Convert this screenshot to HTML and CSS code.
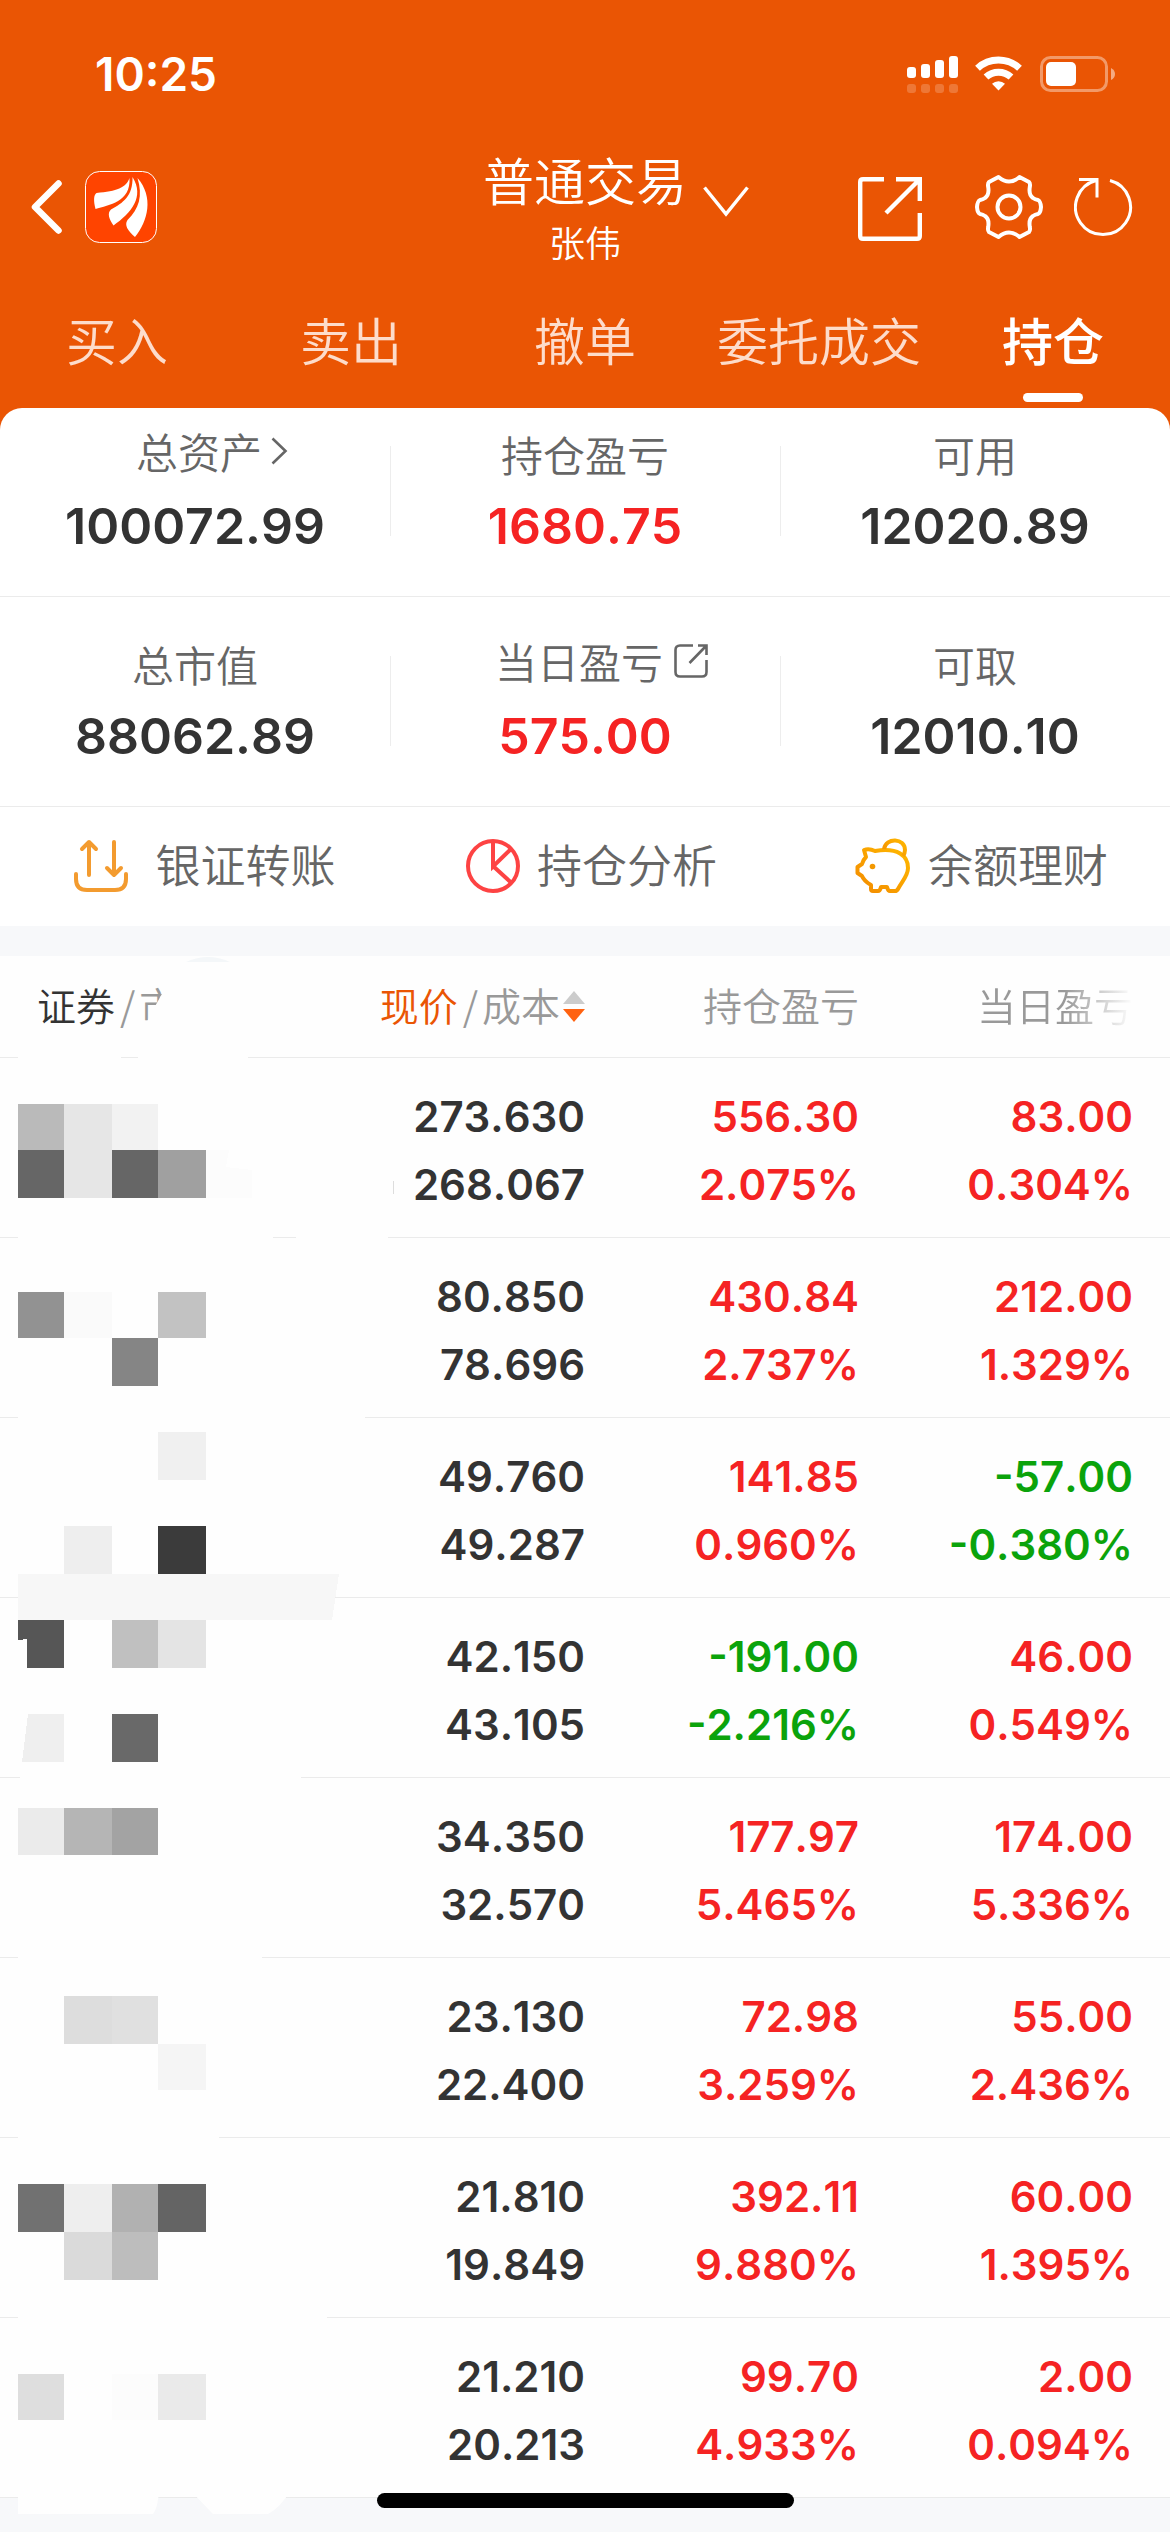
FILE: index.html
```html
<!DOCTYPE html>
<html lang="zh-CN">
  <head>
    <meta charset="UTF-8" />
    <meta name="viewport" content="width=device-width, initial-scale=1.0" />
    <title>持仓</title>
    <link rel="stylesheet" href="styles.css" />
  </head>
  <body>
    <header class="header">
      <div class="status-bar">
        <span class="time">10:25</span>
        <svg class="status-icons" width="210" height="40" viewBox="0 0 210 40" fill="#fff">
          <rect x="0" y="13" width="9" height="11" rx="3" />
          <rect x="14" y="10" width="9" height="14" rx="3" />
          <rect x="28" y="6" width="9" height="18" rx="3" />
          <rect x="42" y="2" width="9" height="22" rx="3" />
          <g opacity="0.2">
            <rect x="0" y="30" width="9" height="9" rx="3" />
            <rect x="14" y="30" width="9" height="9" rx="3" />
            <rect x="28" y="30" width="9" height="9" rx="3" />
            <rect x="42" y="30" width="9" height="9" rx="3" />
          </g>
          <g fill="none" stroke="#fff" stroke-width="7">
            <path d="M70.500 14.200a31 31 0 0 1 42 0" />
            <path d="M79 23a18.500 18.500 0 0 1 25 0" />
          </g>
          <path d="M91.500 36.500l-6.500-6.800a9.500 9.500 0 0 1 13 0z" />
          <rect x="134.500" y="3.500" width="65" height="33" rx="9" fill="none" stroke="#fff" stroke-opacity="0.4" stroke-width="3" />
          <rect x="139" y="8" width="30" height="24" rx="5" />
          <path d="M204 14q4 2 4 6t-4 6z" opacity="0.5" />
        </svg>
      </div>

      <div class="navbar">
        <div class="nav-left">
          <svg width="32" height="54" viewBox="0 0 32 54" fill="none" stroke="#fff" stroke-width="6.500" stroke-linecap="round" stroke-linejoin="round">
            <path d="M27.500 3.500L4 27l23.500 23.500" />
          </svg>
          <svg class="logo" width="72" height="72" viewBox="0 0 72 72">
            <rect x="0.500" y="0.500" width="71" height="71" rx="14" fill="#ff4400" stroke="#fff" />
            <g fill="#fff">
              <path d="M44.500 7C41 17 32 20 11.500 22C8.500 24 8.500 30 10.500 38C24 34 46 31 44.500 7z" />
              <path d="M47.500 6C48 25 38 32 26 38.500C22 42 24 48 28.500 54.500C46 42 60 26 47.500 6z" />
              <path d="M52.500 7C58 25 54 38 42.500 49C39 54 43 60 50 66C63 50 69 26 52.500 7z" />
            </g>
          </svg>
        </div>
        <div class="nav-title">
          <h1>普通交易</h1>
          <p>张伟</p>
        </div>
        <div class="nav-right">
          <svg class="arrow-down" width="46" height="32" viewBox="0 0 46 32" fill="none" stroke="#fff" stroke-width="3.500">
            <path d="M1.500 1.500L23 28 44.500 1.500" />
          </svg>
          <svg class="share" width="64" height="64" viewBox="0 0 64 64" fill="none" stroke="#fff" stroke-width="4.400">
            <path d="M26 2.200H5Q2.200 2.200 2.200 5v54q0 2.800 2.800 2.800h54q2.800 0 2.800-2.800V36" />
            <path d="M38 2.200h23.800V24M61 3L28 36" />
          </svg>
          <svg class="gear" width="68" height="66" viewBox="0 0 68 66" fill="none" stroke="#fff" stroke-width="4" stroke-linejoin="round">
            <path d="M23.500 3L14 8Q12.500 9.500 13.200 13Q14.500 21 10 24Q8 25.500 5 26Q2.500 27 2 33Q2.500 39 5 40Q8 40.500 10 42Q14.500 45 13.200 53Q12.500 56.500 14 58L23.500 63Q34 54 44.500 63L54 58Q55.500 56.500 54.800 53Q53.500 45 58 42Q60 40.500 63 40Q65.500 39 66 33Q65.500 27 63 26Q60 25.500 58 24Q53.500 21 54.800 13Q55.500 9.500 54 8L44.500 3Q34 12 23.500 3z" />
            <circle cx="34" cy="33" r="11.500" />
          </svg>
          <svg class="refresh" width="60" height="60" viewBox="0 0 60 60" fill="none" stroke="#fff" stroke-width="3">
            <path d="M36 3.500A27.500 27.500 0 1 1 22 3.500M5 2.500h18v18" />
          </svg>
        </div>
      </div>

      <nav class="tabs">
        <a class="tab">买入</a>
        <a class="tab">卖出</a>
        <a class="tab">撤单</a>
        <a class="tab">委托成交</a>
        <a class="tab active">持仓</a>
      </nav>
    </header>

    <main>
      <section class="summary">
        <div class="summary-row first">
          <div class="cell">
            <div class="label raised">总资产<svg class="more" width="17" height="28" viewBox="0 0 17 28" fill="none" stroke="#666" stroke-width="2.600"><path d="M1.500 1.500L14.500 14 1.500 26.500" /></svg></div>
            <div class="value">100072.99</div>
          </div>
          <div class="cell">
            <div class="label">持仓盈亏</div>
            <div class="value red">1680.75</div>
          </div>
          <div class="cell">
            <div class="label">可用</div>
            <div class="value">12020.89</div>
          </div>
        </div>
        <div class="summary-row">
          <div class="cell">
            <div class="label">总市值</div>
            <div class="value">88062.89</div>
          </div>
          <div class="cell">
            <div class="label raised">当日盈亏<svg class="open" width="36" height="36" viewBox="0 0 36 36" fill="none" stroke="#666" stroke-width="2.600"><path d="M20 2.500H7Q2.500 2.500 2.500 7v22q0 4.500 4.500 4.500h22q4.500 0 4.500-4.500V17M25 2.500h8.500V12M33 3L16.500 20" /></svg></div>
            <div class="value red">575.00</div>
          </div>
          <div class="cell">
            <div class="label">可取</div>
            <div class="value">12010.10</div>
          </div>
        </div>
      </section>

      <section class="actions">
        <div class="action transfer">
          <svg width="56" height="54" viewBox="0 0 56 54" fill="none" stroke="#f39b2f" stroke-width="4" stroke-linecap="round" stroke-linejoin="round">
            <path d="M16 36V3M9 10l7-7 7 7M41 3v33M34 29l7 7 7-7M3 35v5q0 11 11 11h28q11 0 11-11v-5" />
          </svg>
          <span>银证转账</span>
        </div>
        <div class="action">
          <svg width="54" height="54" viewBox="0 0 54 54" fill="none" stroke="#fd4343" stroke-width="4">
            <circle cx="27" cy="27" r="25" />
            <path d="M27 2v25.500L45 10M27 27l18 16.500" />
          </svg>
          <span>持仓分析</span>
        </div>
        <div class="action">
          <svg width="56" height="56" viewBox="0 0 56 56" fill="none" stroke="url(#gold)" stroke-width="4" stroke-linejoin="round">
            <defs>
              <linearGradient id="gold" x1="1" y1="0" x2="0" y2="1">
                <stop offset="0" stop-color="#ffb800" />
                <stop offset="1" stop-color="#f38b00" />
              </linearGradient>
            </defs>
            <path d="M20 13Q14 10 9 12L11 19Q8 22 7 26L2.500 29V35L7 38Q9 43 16 47V51Q16 53 18 53H23Q25 53 26 49H32Q33 53 35 53H40Q42 53 43 51C47 43 53 38 53 30C53 18 43 9 20 13z" />
            <path d="M29 11C31 -1 50 0 50 12Q50 15 48 18" />
            <circle cx="17.500" cy="28.500" r="2.800" fill="#f39800" stroke="none" />
          </svg>
          <span>余额理财</span>
        </div>
      </section>

      <section class="holdings">
        <div class="table-head">
          <div class="col-name"><b>证券</b><i>/</i>市</div>
          <div class="col-price"><b>现价</b><i>/</i>成本<svg class="sort" width="22" height="32" viewBox="0 0 22 32"><path d="M0 13L11 0l11 13z" fill="#ccc" /><path d="M0 18h22L11 31z" fill="#ff6210" /></svg></div>
          <div>持仓盈亏</div>
          <div class="fade">当日盈亏</div>
        </div>

        <div class="row">
          <div class="price">273.630<br />268.067</div>
          <div class="red">556.30<br />2.075%</div>
          <div class="red">83.00<br />0.304%</div>
        </div>
        <div class="row">
          <div class="price">80.850<br />78.696</div>
          <div class="red">430.84<br />2.737%</div>
          <div class="red">212.00<br />1.329%</div>
        </div>
        <div class="row">
          <div class="price">49.760<br />49.287</div>
          <div class="red">141.85<br />0.960%</div>
          <div class="green">-57.00<br />-0.380%</div>
        </div>
        <div class="row">
          <div class="price">42.150<br />43.105</div>
          <div class="green">-191.00<br />-2.216%</div>
          <div class="red">46.00<br />0.549%</div>
        </div>
        <div class="row">
          <div class="price">34.350<br />32.570</div>
          <div class="red">177.97<br />5.465%</div>
          <div class="red">174.00<br />5.336%</div>
        </div>
        <div class="row">
          <div class="price">23.130<br />22.400</div>
          <div class="red">72.98<br />3.259%</div>
          <div class="red">55.00<br />2.436%</div>
        </div>
        <div class="row">
          <div class="price">21.810<br />19.849</div>
          <div class="red">392.11<br />9.880%</div>
          <div class="red">60.00<br />1.395%</div>
        </div>
        <div class="row">
          <div class="price">21.210<br />20.213</div>
          <div class="red">99.70<br />4.933%</div>
          <div class="red">2.00<br />0.094%</div>
        </div>

        <!-- hides the security names -->
        <svg class="mosaic" width="420" height="1576" viewBox="0 956 420 1576" shape-rendering="crispEdges">
          <g fill="#fefefe" shape-rendering="auto">
            <path d="M168 956H248V1062H138V1040L153 1010L163 992z" />
            <path d="M18 1050h103v12H18zM18 1230h255v14H18zM296 1230h92v14h-92zM18 1410h347v14H18zM20 1770h281v14H20zM18 1950h244v14H18zM18 2130h201v14H18zM18 2310h309v14H18z" />
            <path d="M18 2490H159Q158 2508 153 2514H18zM190 2490H291Q280 2508 268 2514H213z" />
          </g>
          <path d="M186 962q22-10 44 0z" fill="#f4f7f9" shape-rendering="auto" />
          <path d="M393 1181v13" stroke="#ddd" />
          <rect x="18" y="1104" width="46" height="46" fill="#bababa" />
          <rect x="64" y="1104" width="48" height="94" fill="#e6e6e6" />
          <rect x="112" y="1104" width="46" height="46" fill="#f2f2f2" />
          <rect x="18" y="1150" width="46" height="48" fill="#666" />
          <rect x="112" y="1150" width="46" height="48" fill="#666" />
          <rect x="158" y="1150" width="48" height="48" fill="#a0a0a0" />
          <path d="M206 1150h23l-3 17 26 3v28h-46z" fill="#fcfcfc" />

          <rect x="18" y="1292" width="46" height="46" fill="#929292" />
          <rect x="64" y="1292" width="48" height="46" fill="#fafafa" />
          <rect x="158" y="1292" width="48" height="46" fill="#c2c2c2" />
          <rect x="112" y="1338" width="46" height="48" fill="#858585" />

          <rect x="158" y="1432" width="48" height="48" fill="#f0f0f0" />
          <rect x="64" y="1526" width="48" height="48" fill="#eee" />
          <rect x="158" y="1526" width="48" height="48" fill="#3b3b3b" />
          <path d="M18 1574h321l-7 46H18z" fill="#f7f7f7" />

          <path d="M18 1620h46v48H27v-29l-9 1z" fill="#565656" />
          <rect x="112" y="1620" width="46" height="48" fill="#c0c0c0" />
          <rect x="158" y="1620" width="48" height="48" fill="#e4e4e4" />
          <path d="M28 1714h36v48H22z" fill="#efefef" />
          <rect x="112" y="1714" width="46" height="48" fill="#696969" />

          <rect x="18" y="1808" width="46" height="47" fill="#ebebeb" />
          <rect x="64" y="1808" width="48" height="47" fill="#b5b5b5" />
          <rect x="112" y="1808" width="46" height="47" fill="#a3a3a3" />

          <rect x="64" y="1996" width="48" height="48" fill="#ddd" />
          <rect x="112" y="1996" width="46" height="48" fill="#e0e0e0" />
          <rect x="158" y="2044" width="48" height="46" fill="#f5f5f5" />

          <rect x="18" y="2184" width="46" height="48" fill="#717171" />
          <rect x="64" y="2184" width="48" height="48" fill="#eee" />
          <rect x="112" y="2184" width="46" height="48" fill="#b1b1b1" />
          <rect x="158" y="2184" width="48" height="48" fill="#646464" />
          <rect x="64" y="2232" width="48" height="48" fill="#dadada" />
          <rect x="112" y="2232" width="46" height="48" fill="#bdbdbd" />

          <rect x="18" y="2374" width="46" height="46" fill="#dedede" />
          <rect x="112" y="2374" width="46" height="46" fill="#fcfcfc" />
          <rect x="158" y="2374" width="48" height="46" fill="#eaeaea" />
        </svg>
      </section>
    </main>

    <div class="home-indicator"></div>
  </body>
</html>
```
FILE: styles.css
```css
* {
  margin: 0;
  padding: 0;
  box-sizing: border-box;
}

body {
  position: relative;
  width: 1170px;
  height: 2532px;
  overflow: hidden;
  background: #f7f8fa;
  font-family: "Noto Sans CJK SC", sans-serif;
  color: #333;
}

svg {
  display: block;
  flex-shrink: 0;
}

.header {
  height: 430px;
  background: #ea5504;
  color: #fff;
}

.status-bar {
  display: flex;
  justify-content: space-between;
  height: 150px;
  padding: 54px 53px 0 95px;
}

.time {
  font-family: Inter, sans-serif;
  font-size: 46px;
  font-weight: 600;
  line-height: 41px;
}

.navbar {
  display: grid;
  grid-template-columns: 1fr auto 1fr;
  height: 114px;
}

.nav-left {
  display: flex;
  align-items: center;
  gap: 22px;
  padding: 0 0 10px 31px;
}

.nav-title {
  text-align: center;
}

.nav-title h1 {
  font-size: 51px;
  font-weight: 350;
  line-height: 58px;
}

.nav-title p {
  font-size: 36px;
  font-weight: 350;
  line-height: 66px;
}

.nav-right {
  display: flex;
  align-items: center;
  padding: 0 36px 10px 0;
}

.arrow-down {
  margin: -11px auto 0 16px;
}

.share {
  margin-top: 3px;
}

.gear {
  margin-left: 53px;
}

.refresh {
  margin-left: 31px;
}

.tabs {
  display: grid;
  grid-template-columns: repeat(5, 1fr);
  height: 144px;
}

.tab {
  display: flex;
  flex-direction: column;
  align-items: center;
  justify-content: space-between;
  height: 138px;
  padding-top: 42px;
  font-size: 51px;
  font-weight: 350;
  line-height: 66px;
  color: #fddccb;
}

.tab.active {
  color: #fff;
  font-weight: 500;
}

.tab.active::after {
  content: "";
  width: 60px;
  height: 9px;
  border-radius: 5px;
  background: #fff;
}

.summary {
  margin-top: -22px;
  background: #fff;
  border-radius: 22px 22px 0 0;
}

.summary-row {
  display: grid;
  grid-template-columns: repeat(3, 1fr);
  height: 210px;
  padding-top: 37px;
  border-bottom: 1px solid #ebebeb;
}

.summary-row.first {
  height: 189px;
  padding-top: 16px;
}

.cell {
  position: relative;
  text-align: center;
}

.cell + .cell::before {
  content: "";
  position: absolute;
  left: 0;
  top: 22px;
  width: 1px;
  height: 90px;
  background: #ededed;
}

.label {
  display: flex;
  align-items: center;
  justify-content: center;
  height: 60px;
  font-size: 42px;
  font-weight: 350;
  line-height: 60px;
  color: #666;
}

.label.raised {
  margin-top: -3px;
  margin-bottom: 3px;
  padding-left: 34px;
}

.more {
  margin-left: 9px;
}

.open {
  margin-left: 10px;
}

.value {
  font-family: Inter, sans-serif;
  font-size: 50px;
  font-weight: 600;
  font-kerning: none;
  line-height: 84px;
}

.red {
  color: #f52323;
}

.green {
  color: #0ba30b;
}

.actions {
  display: grid;
  grid-template-columns: repeat(3, 1fr);
  height: 119px;
  background: #fff;
}

.action {
  display: flex;
  align-items: center;
  justify-content: center;
  gap: 17px;
  padding: 0 0 2px 13px;
  font-size: 45px;
  font-weight: 350;
  color: #666;
}

.action span {
  margin-top: -4px;
}

.transfer {
  gap: 26px;
  padding-left: 19px;
}

.holdings {
  position: relative;
  margin-top: 30px;
}

.table-head,
.row {
  display: grid;
  grid-template-columns: 300px 285px 274px 274px;
  background: #fefefe;
  border-bottom: 1px solid #ebebeb;
  text-align: right;
}

.table-head {
  height: 102px;
  font-size: 39px;
  font-weight: 350;
  line-height: 97px;
  color: #999;
}

.table-head b {
  font-weight: 350;
}

.table-head i {
  padding: 0 4px 0 5px;
  font-style: normal;
}

.col-name {
  padding-left: 37px;
  text-align: left;
}

.col-name b {
  color: #333;
}

.col-price {
  display: flex;
  height: 97px;
  align-items: center;
  justify-content: flex-end;
}

.col-price b {
  color: #ea5504;
}

.sort {
  margin-top: 4px;
  margin-left: 3px;
}

.fade {
  color: transparent;
  background: linear-gradient(to right, #999 75%, #fefefe 100%);
  background-clip: text;
  -webkit-background-clip: text;
}

.row {
  height: 180px;
  padding-top: 25px;
  font-family: Inter, sans-serif;
  font-size: 42px;
  font-weight: 600;
  font-kerning: none;
  line-height: 68px;
}

.price {
  grid-column: 1 / 3;
}

.mosaic {
  position: absolute;
  left: 0;
  top: 0;
}

.home-indicator {
  position: absolute;
  left: 377px;
  top: 2493px;
  width: 417px;
  height: 15px;
  border-radius: 8px;
  background: #000;
}
```
